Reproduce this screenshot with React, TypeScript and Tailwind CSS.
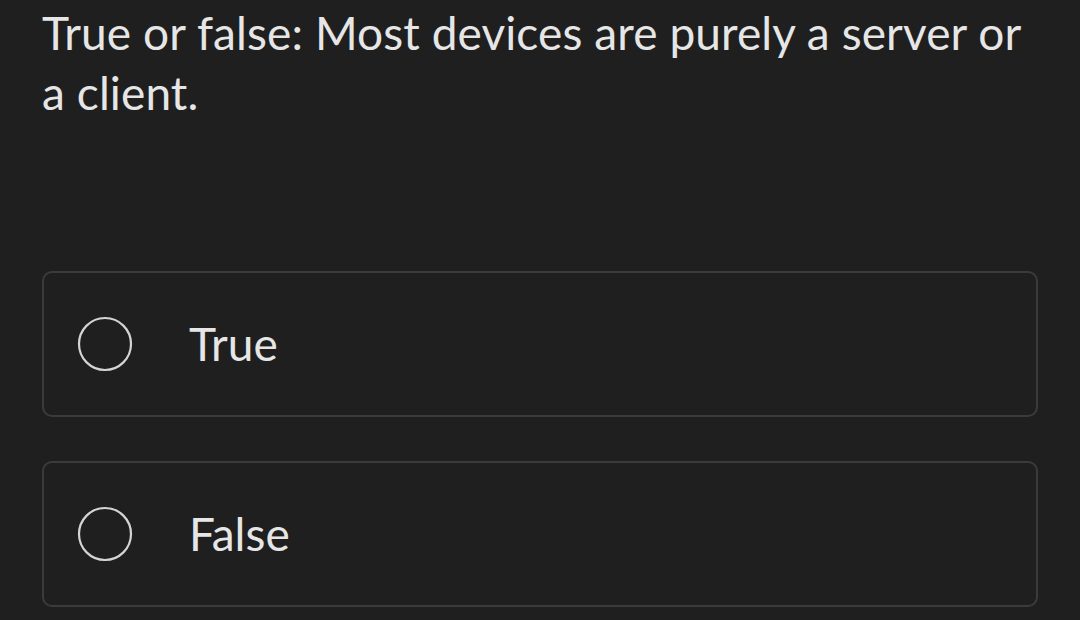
const options = ['True', 'False'];

function Radio() {
  return (
    <svg width="56" height="56" viewBox="0 0 56 56" className="shrink-0">
      <circle cx="28" cy="28" r="26" fill="none" stroke="#d4d4d4" strokeWidth="2.2" />
    </svg>
  );
}

export default function App() {
  return (
    <div
      className="w-[1080px] h-[620px] overflow-hidden bg-[#1f1f1f] text-[#e6e6e6] px-[42px] pt-[3px]"
      style={{ fontFamily: 'Lato, "Noto Sans", sans-serif' }}
    >
      {/* Question */}
      <h1 className="text-[46px] leading-[60px] font-normal tracking-[0.1px] pr-[16px]">
        True or false: Most devices are purely a server or a client.
      </h1>

      {/* Answers */}
      <div className="mt-[148px] w-[996px] flex flex-col gap-[44px]">
        {options.map((opt) => (
          <div
            key={opt}
            className="h-[146px] flex items-center gap-[56px] pl-[33px] border-2 border-[#3b3b3b] rounded-[10px]"
          >
            <Radio />
            <span className="text-[46px] leading-none">{opt}</span>
          </div>
        ))}
      </div>
    </div>
  );
}
